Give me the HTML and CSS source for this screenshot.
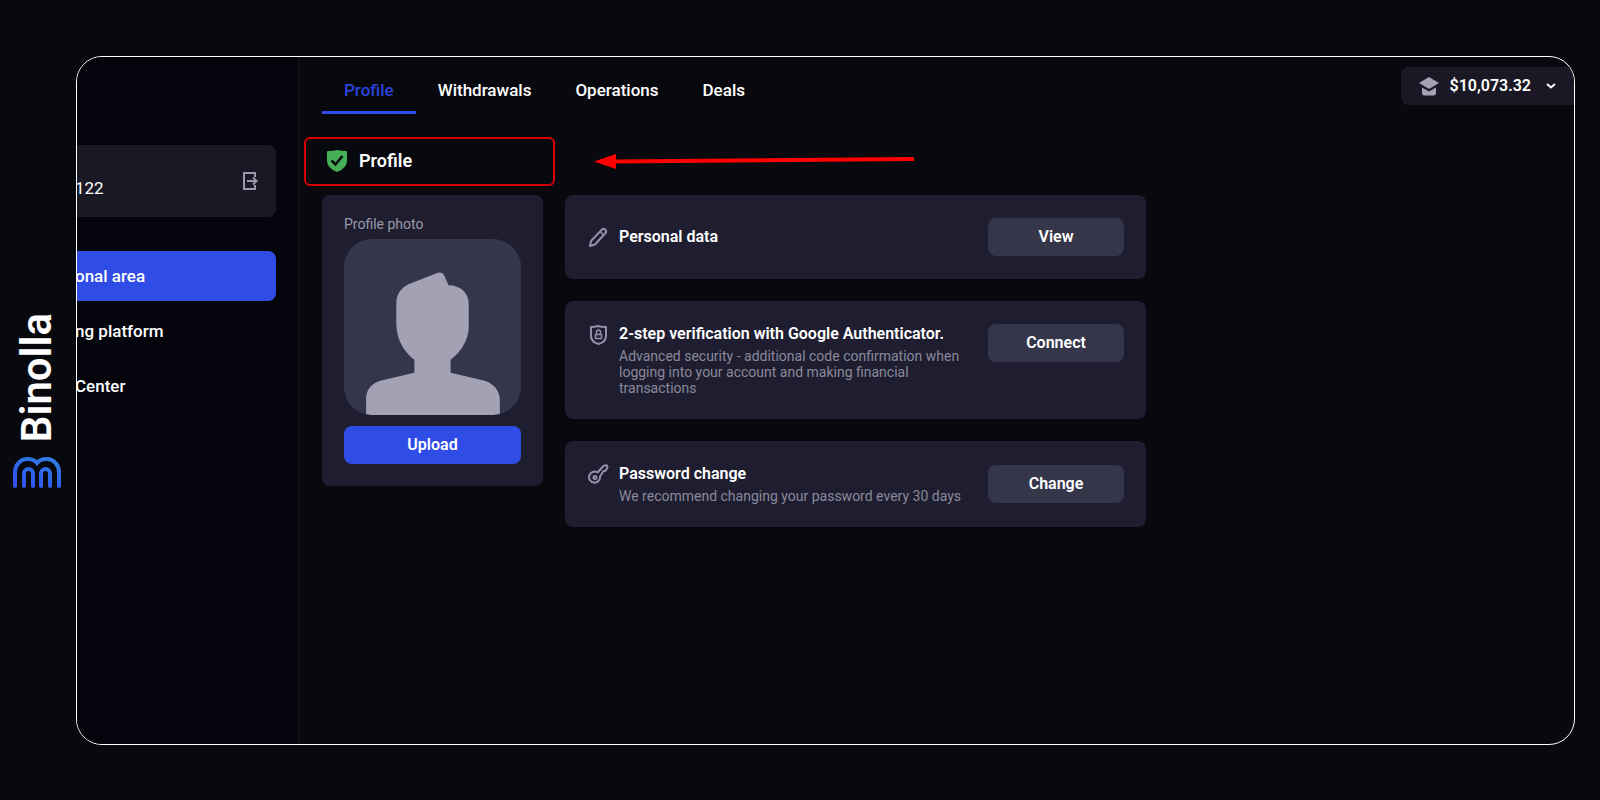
FILE: index.html
```html
<!DOCTYPE html>
<html lang="en">
<head>
<meta charset="UTF-8">
<meta name="viewport" content="width=device-width, initial-scale=1.0">
<title>Binolla - Profile</title>
<link rel="stylesheet" href="styles.css">
</head>
<body>

<div class="brand">
    <span class="brand-name">Binolla</span>
    <svg class="brand-logo" width="48" height="31" viewBox="0 0 48 31" fill="none" stroke="url(#brandGradient)" stroke-width="4" stroke-linecap="round">
        <defs>
            <linearGradient id="brandGradient" gradientUnits="userSpaceOnUse" x1="30" y1="0" x2="18" y2="31">
                <stop offset="0" stop-color="#2f7be6"/>
                <stop offset="1" stop-color="#2f52ea"/>
            </linearGradient>
        </defs>
        <path d="M2 29V15C2 8 7.500 2 14.500 2C18.500 2 22 3.500 24 6C26 3.500 29.500 2 33.500 2C40.500 2 46 8 46 15V29"/>
        <path d="M11 29V16.500a4.500 4.500 0 0 1 9 0V29"/>
        <path d="M28 29V16.500a4.500 4.500 0 0 1 9 0V29"/>
    </svg>
</div>

<div class="frame">
    <aside class="sidebar">
        <div class="user-card">
            <span class="user-id">122</span>
            <button class="logout" type="button" aria-label="Log out">
                <svg width="16" height="20" viewBox="0 0 16 20" fill="none" stroke="#9a99ab" stroke-width="2">
                    <path d="M13 6V2H2v16h11v-4"/>
                    <path d="M5 10h9M11 6.500l3.500 3.500L11 13.500"/>
                </svg>
            </button>
        </div>
        <nav class="menu">
            <a class="menu-link active" href="#">onal area</a>
            <a class="menu-link" href="#">ng platform</a>
            <a class="menu-link" href="#">Center</a>
        </nav>
    </aside>

    <main class="main">
        <header class="topbar">
            <nav class="tabs">
                <a class="tab active" href="#">Profile</a>
                <a class="tab" href="#">Withdrawals</a>
                <a class="tab" href="#">Operations</a>
                <a class="tab" href="#">Deals</a>
            </nav>
            <button class="balance" type="button">
                <svg width="20" height="20" viewBox="0 0 20 20" fill="#a3a2b5">
                    <path d="M10 1l10 6-10 6L0 7z"/>
                    <path d="M3 11.500l7 4 7-4v5.500q0 2.500-2.500 2.500h-9Q3 19.500 3 17z"/>
                </svg>
                <span>$10,073.32</span>
                <svg width="10" height="6" viewBox="0 0 10 6" fill="none" stroke="#ffffff" stroke-width="2">
                    <path d="M1 1l4 3.500L9 1"/>
                </svg>
            </button>
        </header>

        <div class="title-row">
            <h1 class="title">
                <svg width="20" height="22" viewBox="0 0 20 22">
                    <path d="M0 2Q0 1 1 1Q6 1 10 0Q14 1 19 1Q20 1 20 2V11Q20 18 10 22Q0 18 0 11z" fill="#45b058"/>
                    <path d="M4.500 10.500l4 4L15.500 6" fill="none" stroke="#08090e" stroke-width="2.500"/>
                </svg>
                Profile
            </h1>
            <svg class="arrow" width="320" height="16" viewBox="0 0 320 16">
                <path d="M20 7.500L320 5" stroke="#ff0000" stroke-width="4"/>
                <path d="M0 7.500L22 0V15z" fill="#ff0000"/>
            </svg>
        </div>

        <div class="content">
            <section class="photo-card">
                <p class="photo-label">Profile photo</p>
                <svg class="avatar" viewBox="0 0 176 175">
                    <path fill="#a3a2b4" d="M22 175V159C22 150 27 144 36 141L70 133V120C58 111 52 98 52 84V64C52 56 56 49 64 45L92 34Q98 32 100 37L104 46C116 46 124 54 124 64V88C124 99 117 112 106 120V133L140 141C149 144 155 151 155 160V175z"/>
                </svg>
                <button class="btn btn-primary" type="button">Upload</button>
            </section>

            <div class="settings">
                <section class="setting">
                    <svg class="setting-icon" width="22" height="22" viewBox="0 0 22 22" fill="none" stroke="#9291a5" stroke-width="2" stroke-linejoin="round">
                        <path d="M3 20l1-5L15 3.500q1.500-1.500 3 0l.5.5q1.500 1.500 0 3L8 18.500z"/>
                        <path d="M13 5.500l3.500 3.500" stroke-width="1.500"/>
                    </svg>
                    <div class="setting-text">
                        <h2>Personal data</h2>
                    </div>
                    <button class="btn" type="button">View</button>
                </section>

                <section class="setting setting-top">
                    <svg class="setting-icon" width="22" height="22" viewBox="0 0 22 22" fill="none" stroke="#9291a5" stroke-width="2" stroke-linejoin="round">
                        <path d="M4 3Q8 3 11 2Q14 3 19 3V12Q19 18 11.500 20Q4 18 4 12z"/>
                        <path d="M8.500 10.500h6v4h-6zM9.500 10.500V8a2 2 0 0 1 4 0V10.500" stroke-width="1.500"/>
                    </svg>
                    <div class="setting-text">
                        <h2>2-step verification with Google Authenticator.</h2>
                        <p>Advanced security - additional code confirmation when logging into your account and making financial transactions</p>
                    </div>
                    <button class="btn" type="button">Connect</button>
                </section>

                <section class="setting">
                    <svg class="setting-icon icon-top" width="22" height="22" viewBox="0 0 22 22" fill="none" stroke="#9291a5" stroke-width="2" stroke-linejoin="round">
                        <path d="M10.500 8.500L16 2.500Q17 1 20 1.500Q21 3.500 19.500 5.500L18 7H16.500L13 12.500A5.500 5.500 0 1 1 10.500 8.500z"/>
                        <circle cx="8" cy="13.500" r="1.500"/>
                    </svg>
                    <div class="setting-text">
                        <h2>Password change</h2>
                        <p>We recommend changing your password every 30 days</p>
                    </div>
                    <button class="btn" type="button">Change</button>
                </section>
            </div>
        </div>
    </main>
</div>

</body>
</html>
```

FILE: styles.css
```css
* {
    box-sizing: border-box;
}
body {
    display: flex;
    min-height: 100vh;
    margin: 0;
    padding: 56px 25px 55px 0;
    background-color: #08090e;
    color: #ffffff;
    font-family: Roboto, "Liberation Sans", sans-serif;
    font-size: 17px;
    line-height: 20px;
}
h1, h2, p {
    margin: 0;
}
a {
    color: inherit;
    text-decoration: none;
}
button {
    border: none;
    color: inherit;
    font: inherit;
    cursor: pointer;
}
svg {
    flex-shrink: 0;
}

.brand {
    display: flex;
    flex: 0 0 76px;
    flex-direction: column;
    align-items: center;
    justify-content: center;
    gap: 14px;
    padding-right: 2px;
}
.brand-name {
    font-size: 42px;
    font-weight: 600;
    line-height: 48px;
    writing-mode: vertical-rl;
    transform: rotate(180deg);
}

.frame {
    display: flex;
    flex: 1;
    min-width: 0;
    border: 1px solid #ffffff;
    border-radius: 26px;
    overflow: hidden;
}

.sidebar {
    flex: 0 0 222px;
    padding: 88px 22px 0 0;
    border-right: 1px solid #14151a;
    background-color: #04040c;
}
.user-card {
    display: flex;
    align-items: center;
    justify-content: space-between;
    height: 72px;
    padding-right: 18px;
    border-radius: 0 8px 8px 0;
    background-color: #191824;
}
.user-id {
    padding-top: 14px;
    text-indent: -2px;
}
.logout {
    display: flex;
    padding: 0;
    background: none;
}
.menu {
    display: flex;
    flex-direction: column;
    gap: 5px;
    margin-top: 34px;
}
.menu-link {
    padding: 15px 0;
    border-radius: 0 8px 8px 0;
    font-weight: 500;
    text-indent: -2px;
}
.menu-link.active {
    background-color: #2f4de6;
}

.main {
    flex: 1;
    min-width: 0;
    padding-left: 23px;
}
.topbar {
    display: flex;
    align-items: flex-start;
    justify-content: space-between;
}
.tabs {
    display: flex;
}
.tab {
    padding: 23px 22px 11px;
    border-bottom: 3px solid transparent;
    font-weight: 500;
}
.tab.active {
    border-color: #2f4de6;
    color: #2c42dc;
}
.balance {
    display: flex;
    align-items: center;
    gap: 11px;
    height: 38px;
    margin-top: 10px;
    padding: 0 18px;
    border-radius: 8px 0 0 8px;
    background-color: #191824;
    font-size: 16px;
    font-weight: 600;
}
.balance svg:last-child {
    margin-left: 4px;
}

.title-row {
    display: flex;
    align-items: center;
    gap: 39px;
    margin: 23px 0 9px -18px;
}
.title {
    display: flex;
    align-items: center;
    gap: 12px;
    width: 251px;
    height: 49px;
    padding: 0 21px 2px;
    border: 2px solid #d60000;
    border-radius: 6px;
    font-size: 18px;
    font-weight: 600;
}

.content {
    display: grid;
    grid-template-columns: 221px minmax(0, 581px);
    align-items: start;
    gap: 22px;
}
.photo-card {
    padding: 19px 22px 22px;
    border-radius: 8px;
    background-color: #1e1e30;
}
.photo-label {
    margin-bottom: 5px;
    color: #9a99ab;
    font-size: 14px;
}
.avatar {
    display: block;
    width: 100%;
    margin-bottom: 11px;
    border-radius: 28px;
    background-color: #36364a;
}
.btn {
    width: 136px;
    height: 38px;
    padding: 0;
    border-radius: 8px;
    background-color: #36364a;
    font-size: 16px;
    font-weight: 600;
}
.btn-primary {
    width: 100%;
    background-color: #2f4de6;
}

.settings {
    display: flex;
    flex-direction: column;
    gap: 22px;
}
.setting {
    display: flex;
    align-items: center;
    padding: 23px 22px;
    border-radius: 8px;
    background-color: #1e1e30;
}
.setting-top {
    align-items: flex-start;
}
.setting-icon {
    margin-right: 10px;
}
.icon-top {
    align-self: flex-start;
}
.setting-text {
    flex: 1;
    padding-right: 24px;
}
.setting h2 {
    font-size: 16px;
    font-weight: 600;
    line-height: 20px;
}
.setting p {
    margin-top: 4px;
    color: #8a899c;
    font-size: 14px;
    line-height: 16px;
}
```
